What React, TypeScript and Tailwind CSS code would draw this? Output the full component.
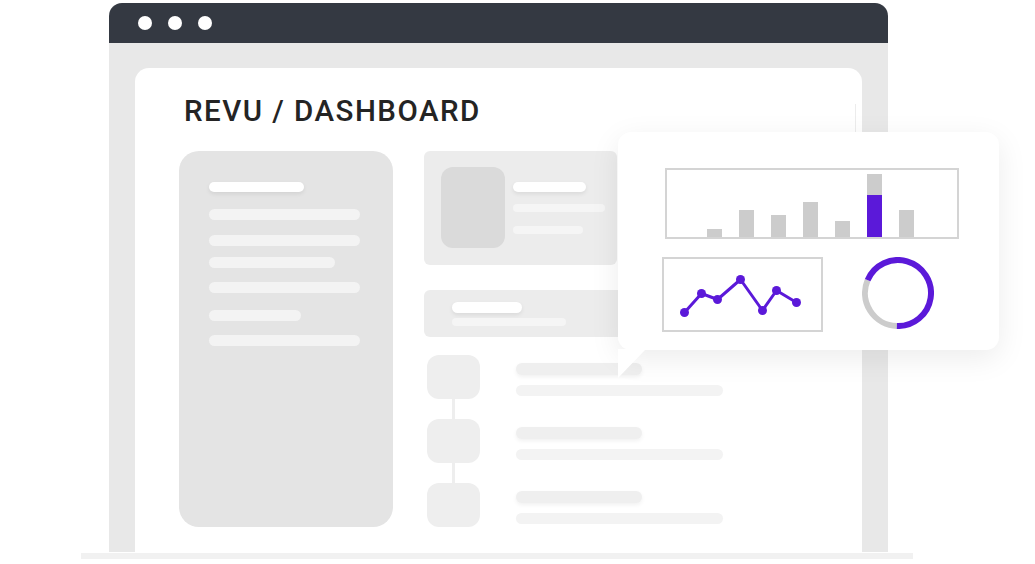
import * as React from 'react';

const bars = [
  { h: 8 },
  { h: 27 },
  { h: 22 },
  { h: 35 },
  { h: 16 },
  { h: 63, accent: 42 },
  { h: 27 },
];

const points = '21,54 38,35 54,41 77,21 99,52 113,32 133,44';

function Sidebar() {
  return (
    <div className="w-[214px] h-[376px] shrink-0 rounded-[20px] bg-[#e4e4e4] pl-[30px] pt-[31px] flex flex-col">
      <div className="w-[95px] h-[10px] rounded-full bg-white shadow-[0_2px_4px_rgba(0,0,0,0.08)]" />
      <div className="mt-[17px] w-[151px] h-[11px] rounded-full bg-[#f3f3f3]" />
      <div className="mt-[15px] w-[151px] h-[11px] rounded-full bg-[#f3f3f3]" />
      <div className="mt-[11px] w-[126px] h-[11px] rounded-full bg-[#f3f3f3]" />
      <div className="mt-[14px] w-[151px] h-[11px] rounded-full bg-[#f3f3f3]" />
      <div className="mt-[17px] w-[92px] h-[11px] rounded-full bg-[#f3f3f3]" />
      <div className="mt-[14px] w-[151px] h-[11px] rounded-full bg-[#f3f3f3]" />
    </div>
  );
}

function TimelineRow({ last }: { last?: boolean }) {
  return (
    <div className="flex">
      <div className="flex flex-col items-center w-[53px] ml-[3px]">
        <div className="w-[53px] h-[44px] rounded-[12px] bg-[#eeeeee]" />
        {!last && <div className="w-[3px] h-[20px] bg-[#eeeeee]" />}
      </div>
      <div className="ml-[36px] pt-[8px] flex flex-col">
        <div className="w-[126px] h-[12px] rounded-full bg-[#efefef] shadow-[0_2px_4px_rgba(0,0,0,0.06)]" />
        <div className="mt-[10px] w-[207px] h-[11px] rounded-full bg-[#f3f3f3]" />
      </div>
    </div>
  );
}

function MiddleColumn() {
  return (
    <div className="flex flex-col ml-[31px]">
      <div className="w-[193px] h-[114px] rounded-[6px] bg-[#ececec] flex pl-[17px] pt-[16px]">
        <div className="w-[64px] h-[81px] rounded-[12px] bg-[#dadada]" />
        <div className="ml-[8px] pt-[15px] flex flex-col">
          <div className="w-[73px] h-[10px] rounded-full bg-white shadow-[0_2px_4px_rgba(0,0,0,0.08)]" />
          <div className="mt-[12px] w-[92px] h-[8px] rounded-full bg-[#f5f5f5]" />
          <div className="mt-[14px] w-[70px] h-[8px] rounded-full bg-[#f5f5f5]" />
        </div>
      </div>
      <div className="mt-[25px] w-[260px] h-[47px] rounded-[6px] bg-[#ececec] pl-[28px] pt-[12px] flex flex-col">
        <div className="w-[70px] h-[11px] rounded-full bg-white shadow-[0_2px_4px_rgba(0,0,0,0.08)]" />
        <div className="mt-[5px] w-[114px] h-[8px] rounded-full bg-[#f5f5f5]" />
      </div>
      <div className="mt-[18px] flex flex-col">
        <TimelineRow />
        <TimelineRow />
        <TimelineRow last />
      </div>
    </div>
  );
}

function Popup() {
  return (
    <div className="absolute left-[618px] top-[132px] w-[381px] h-[218px]">
      <svg className="absolute left-0 top-[217px]" width="30" height="30" viewBox="0 0 30 30">
        <polygon points="0,0 0,29 28,0" fill="#ffffff" />
      </svg>
      <div className="w-full h-full rounded-[13px] bg-white shadow-[0_8px_30px_rgba(0,0,0,0.08)] pt-[36px] pl-[44px] flex flex-col">
        <div className="ml-[3px] w-[294px] h-[71px] border-[2.5px] border-[#d4d4d4] flex items-end pl-[39.5px] gap-[17px]">
          {bars.map((b, i) => (
            <div key={i} className="w-[15px] bg-[#cccccc] flex flex-col justify-end" style={{ height: b.h }}>
              {b.accent && <div className="w-full bg-[#5b19d9]" style={{ height: b.accent }} />}
            </div>
          ))}
        </div>
        <div className="mt-[18px] flex items-start">
          <div className="w-[161px] h-[75px] border-[2.5px] border-[#d4d4d4]">
            <svg width="156" height="70" viewBox="0.5 0.5 156 70">
              <polyline points={points} fill="none" stroke="#5b19d9" strokeWidth="3" strokeLinejoin="round" />
              {points.split(' ').map((p, i) => {
                const [x, y] = p.split(',');
                return <circle key={i} cx={x} cy={y} r="4.5" fill="#5b19d9" />;
              })}
            </svg>
          </div>
          <svg className="ml-[39px]" width="72" height="72" viewBox="0 0 72 72">
            <path d="M34.85 69 A33 33 0 0 1 5.62 23.11" fill="none" stroke="#cccccc" strokeWidth="6" />
            <path d="M5.62 23.11 A33 33 0 1 1 34.85 69" fill="none" stroke="#5b19d9" strokeWidth="6" />
          </svg>
        </div>
      </div>
    </div>
  );
}

export default function App() {
  return (
    <div className="relative w-[1035px] h-[564px] bg-white overflow-hidden font-['Roboto',sans-serif]">
      <div className="ml-[109px] pt-[3px] w-[779px] h-[552px] flex flex-col">
        <div className="h-[40px] shrink-0 rounded-t-[13px] bg-[#343942] flex items-center pl-[29px] gap-[16px]">
          <div className="w-[14px] h-[14px] rounded-full bg-white" />
          <div className="w-[14px] h-[14px] rounded-full bg-white" />
          <div className="w-[14px] h-[14px] rounded-full bg-white" />
        </div>
        <div className="flex-1 bg-[#e8e8e8] px-[26px] pt-[25px]">
          <div className="relative h-full rounded-t-[14px] bg-white">
            <div className="absolute right-[6px] top-[36px] w-px h-[120px] bg-[#ececec]" />
            <h1 className="pl-[49px] pt-[26px] text-[29.5px] leading-[34px] font-medium tracking-[0.05em] text-[#242424]">
              REVU / DASHBOARD
            </h1>
            <div className="flex pl-[44px] mt-[23px]">
              <Sidebar />
              <MiddleColumn />
            </div>
          </div>
        </div>
      </div>
      <div className="ml-[81px] mt-[1px] w-[832px] h-[6px] bg-[#f1f1f1]" />
      <Popup />
    </div>
  );
}
